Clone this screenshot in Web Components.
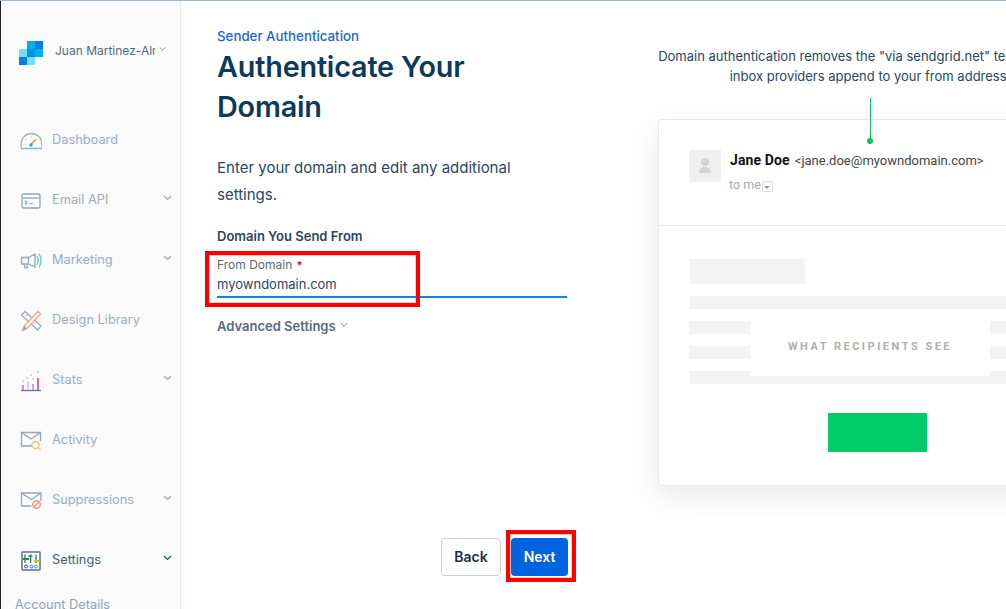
<!DOCTYPE html>
<html lang="en"><head><meta charset="utf-8"><title>Sender Authentication</title>
<style>
html,body{margin:0;height:609px;overflow:hidden;background:#fff;font-family:Inter,"Liberation Sans",sans-serif}
</style></head><body>
<app-shell>
  <side-bar slot="side">
    <user-menu slot="top" name="Juan Martinez-Almeida"></user-menu>
    <nav-item icon="dash">Dashboard</nav-item>
    <nav-item icon="api" caret>Email API</nav-item>
    <nav-item icon="mkt" caret>Marketing</nav-item>
    <nav-item icon="design">Design Library</nav-item>
    <nav-item icon="stats" caret>Stats</nav-item>
    <nav-item icon="activity">Activity</nav-item>
    <nav-item icon="supp" caret>Suppressions</nav-item>
    <nav-item icon="settings" caret active>Settings</nav-item>
    <sub-item>Account Details</sub-item>
  </side-bar>
  <domain-form slot="form"></domain-form>
  <email-preview slot="preview"></email-preview>
</app-shell>
<script>
const chev=(c,w=9)=>`<svg width="${w}" height="6" viewBox="0 0 9 6" fill="none" stroke="${c}" stroke-width="1.1"><path d="M1 1l3.500 3.500L8 1"/></svg>`;
const ICONS={
dash:`<path d="M1 18.500h20.500c.5-1 .5-2.500.5-4C22 8 17 3.500 11.500 3.500S1 8 1 14.500c0 1.500 0 3 .5 4z" fill="none" stroke="#a3b0bf" stroke-width="1.300"/><path d="M11.500 6v2M5.500 9l1.300 1.300M17 9l-1.300 1.300M3.500 14.500h2" stroke="#f7d98a" stroke-width="1.200"/><path d="M11 14.500l4.500-5" stroke="#ff8a65" stroke-width="1.400"/><circle cx="11" cy="15" r="1.700" fill="#3f9ae8"/>`,
api:`<rect x="2" y="4" width="18" height="14" rx="1.500" fill="none" stroke="#94a5b5" stroke-width="1.300"/><path d="M2 8h18" stroke="#94a5b5" stroke-width="1.300"/><path d="M5 10.500l2 2-2 2" fill="none" stroke="#2fd6a0" stroke-width="1.100"/><path d="M9 13.500h4" stroke="#9db3c5" stroke-width="1.100"/>`,
mkt:`<path d="M1.500 7.500h7v6.500h-7zM8.500 7.500L15 4v13l-6.500-3z" fill="none" stroke="#94a5bd" stroke-width="1.300"/><path d="M4 14l1 4h2.500l-1-4" fill="none" stroke="#94a5bd" stroke-width="1.200"/><path d="M17 6c1.500 3 1.500 6 0 9" fill="none" stroke="#6fb7f0" stroke-width="1.200"/><path d="M19 3.500c2.500 4.500 2.500 9.500 0 14" fill="none" stroke="#3fdcb5" stroke-width="1.200"/>`,
design:`<path d="M1.500 5l3.500-3.500 16 14.500-3.500 4z" fill="none" stroke="#9aa9b8" stroke-width="1.300"/><path d="M6 6l1.500-1.500M10 10l1.500-1.500M14 14l1.500-1.500" stroke="#9aa9b8"/><path d="M18 1.500l2.500 2.500L7 18.500l-4.500 2 1.800-4.700z" fill="#fbfbfb" stroke="#ff9a8a" stroke-width="1.300"/><path d="M2.500 20.500l1.800-4.700L7 18.500z" fill="#94a5b5"/>`,
stats:`<path d="M1 20.500h20" stroke="#5f7894" stroke-width="1.300"/><rect x="2" y="15" width="2" height="5" fill="#ff7eb0"/><rect x="7" y="11.500" width="2" height="8.500" fill="#e7c7f7"/><rect x="12" y="14" width="2" height="6" fill="#c3a1ee"/><rect x="17" y="8" width="2" height="12" fill="#bb6bd9"/><path d="M2.500 11h1M6.500 8h1M10.500 5h1M12.500 9h1M17 2h1.500" stroke="#94a5b5" stroke-width="1.500"/>`,
activity:`<path d="M12 16H1.500V2.500h19V11" fill="none" stroke="#94a5b5" stroke-width="1.300"/><path d="M1.500 2.500l9.500 6.500 9.500-6.500" fill="none" stroke="#94a5b5" stroke-width="1.200"/><circle cx="15.500" cy="15" r="3.500" fill="none" stroke="#fbbf70" stroke-width="1.300"/><path d="M18 17.500l2.500 2.500" stroke="#fbbf70" stroke-width="1.400"/>`,
supp:`<path d="M11.500 16H1.500V3h19.500v8" fill="none" stroke="#94a5b5" stroke-width="1.300"/><path d="M1.500 3l10 6.500L21 3" fill="none" stroke="#94a5b5" stroke-width="1.200"/><circle cx="16.500" cy="14.500" r="3.800" fill="none" stroke="#ff8a7a" stroke-width="1.400"/><path d="M14 17l5-5" stroke="#ff8a7a" stroke-width="1.400"/>`,
settings:`<rect x="2" y="2" width="18" height="18" rx="1" fill="#fff" stroke="#7c92a8" stroke-width="2"/><path d="M5 4.500v8.500M10.700 4.500v8.500M16 4.500v8.500" stroke="#1a3b55" stroke-width="1"/><path d="M3 9h6" stroke="#0a9a46" stroke-width="2"/><path d="M8.500 6h4" stroke="#0a9a46" stroke-width="1.500"/><path d="M14 11h5.500" stroke="#c8d400" stroke-width="2"/><circle cx="6" cy="16.500" r="1.500" fill="none" stroke="#4d3f9e"/><circle cx="11.500" cy="16.500" r="1.500" fill="none" stroke="#3a7ac8"/><circle cx="16" cy="16.500" r="1.500" fill="none" stroke="#22b8d8"/>`
};
function el(name,html){customElements.define(name,class extends HTMLElement{connectedCallback(){if(this.shadowRoot)return;const s=this.attachShadow({mode:'open'});s.innerHTML=typeof html==='function'?html(this):html;}});}
el('app-shell',`<style>:host{display:flex;height:609px;border-top:1px solid #a3b5cc;box-sizing:border-box;overflow:hidden}
.s{flex:none;width:181px}.f{flex:none;width:386px;padding-left:36px;box-sizing:border-box}.p{flex:1;min-width:0;overflow:hidden}</style>
<div class="s"><slot name="side"></slot></div><div class="f"><slot name="form"></slot></div><div class="p"><slot name="preview"></slot></div>`);
el('side-bar',`<style>:host{display:block;height:608px;box-sizing:border-box;background:#fafafa;border-left:1px solid #222;border-right:1px solid #e2e9ef;overflow:hidden}
.items{display:flex;flex-direction:column}</style><slot name="top"></slot><div class="items"><slot></slot></div>`);
el('user-menu',h=>`<style>:host{display:flex;align-items:flex-start;height:109px;box-sizing:border-box;padding:40px 0 0 18px;color:#546b81;font-size:12px}
.logo{flex:none;display:grid;grid-template-columns:repeat(3,8px);grid-auto-rows:8px;margin-right:12px}
.logo i{display:block}.n{width:100px;overflow:hidden;white-space:nowrap;line-height:20px;margin-right:4px;height:20px}
svg{margin-top:5px}</style>
<div class="logo"><i></i><i style="background:#00b2e3"></i><i style="background:#0080e6"></i><i style="background:#6fe0f5"></i><i style="background:#0095dd"></i><i style="background:#00b2e3"></i><i style="background:#0080e6"></i><i style="background:#6fe0f5"></i><i></i></div>
<div class="n">${h.getAttribute('name')}</div>${chev('#6a8096',7)}`);
el('nav-item',h=>{const a=h.hasAttribute('active');return `<style>:host{display:flex;align-items:center;height:60px;box-sizing:border-box;padding:0 8px 0 19px;font-size:12.800px;color:${a?'#41607e':'#9cadbe'}}
svg.i{flex:none;width:22px;height:22px;margin-right:10px;margin-top:2px}span{flex:1;margin-top:-1px}.c{display:flex;margin-top:-4px}</style>
<svg class="i" viewBox="0 0 22 22">${ICONS[h.getAttribute('icon')]}</svg><span><slot></slot></span>${h.hasAttribute('caret')?`<div class="c">${chev(a?'#1f4f78':'#94a9bd')}</div>`:''}`});
el('sub-item',`<style>:host{display:block;padding:1px 0 0 14px;font-size:12.800px;color:#8fa3b6;white-space:nowrap;line-height:16px;margin-top:6px}</style><slot></slot>`);
el('domain-form',`<style>:host{display:flex;flex-direction:column;width:350px;position:relative;height:608px;box-sizing:border-box;padding-top:27px}
.eyebrow{font-size:13.300px;font-weight:500;color:#1a65d6;line-height:16px}
h1{margin:3px 0 0;font-size:28.800px;line-height:40px;font-weight:600;color:#0e3a5a;letter-spacing:-.2px;width:300px}
p{margin:27px 0 0;font-size:15px;line-height:27px;color:#294661;width:310px}
h2{margin:20px 0 0;font-size:13px;line-height:16px;font-weight:600;color:#294661}
.field{margin-top:13px;border-bottom:2px solid #0f85e6;height:41px;box-sizing:border-box}
label{display:block;font-size:12px;line-height:16px;color:#546b81}label b{color:#e3001b;font-weight:700;margin-left:1px;font-size:11px}
.v{font-size:13px;line-height:18px;margin-top:2px;color:#294661}
.adv{margin-top:20px;font-size:13px;line-height:16px;font-weight:600;color:#546b81;display:flex;align-items:center;gap:4px}.adv svg{margin-top:-3px}
.btns{position:absolute;top:537px;left:224px;display:flex;gap:10px}
button{font:600 14px Inter,sans-serif;height:38px;border-radius:4px;box-sizing:border-box;padding:0 0 1px}
.b{width:60px;background:#fff;border:1px solid #c9d0da;color:#1c2d3f}.n{width:57px;background:#0263e0;border:0;color:#fff}
.red{position:absolute;border:4px solid #f00;box-sizing:border-box;pointer-events:none;box-shadow:inset 0 0 0 1px rgba(255,0,0,.2)}</style>
<div class="eyebrow">Sender Authentication</div>
<h1>Authenticate Your Domain</h1>
<p>Enter your domain and edit any additional settings.</p>
<h2>Domain You Send From</h2>
<div class="field"><label>From Domain <b>*</b></label><div class="v">myowndomain.com</div></div>
<div class="adv">Advanced Settings ${chev('#6a8096',8)}</div>
<div class="btns"><button class="b">Back</button><button class="n">Next</button></div>
<div class="red" style="left:-12px;top:250px;width:215px;height:56px"></div>
<div class="red" style="left:289px;top:529px;width:70px;height:52px"></div>`);
el('email-preview',`<style>:host{display:block;position:relative;height:608px;width:500px;box-sizing:border-box}
.t{position:absolute;left:3px;width:600px;top:45px;text-align:center;font-size:13px;line-height:20px;color:#294661;white-space:nowrap}
.t span{padding-right:38px}
.ln{position:absolute;left:303px;top:97px;width:1px;height:44px;background:#00c767}.dot{position:absolute;left:300px;top:137px;width:6px;height:6px;border-radius:50%;background:#00c767}
.card{position:absolute;left:91px;top:118px;width:440px;height:367px;background:#fff;border:1px solid #e8e8e8;border-radius:4px;box-sizing:border-box;box-shadow:0 10px 30px rgba(0,0,0,.09)}
.head{height:106px;border-bottom:1px solid #e8e8e8;box-sizing:border-box;padding:30px 0 0 30px;display:flex;gap:9px}
.av{width:32px;height:32px;background:#efefef;display:flex;align-items:center;justify-content:center}
.who{font:13px/16px Roboto,sans-serif;color:#444;padding-top:2px}.who b{font-size:14px;color:#111;font-weight:700;font-family:Roboto,sans-serif;margin-right:2px;letter-spacing:.1px}
.me{margin-top:8px;margin-left:-1px;color:#aaa;display:flex;align-items:center;font-size:12.500px}.me i{display:inline-flex;align-items:center;justify-content:center;width:9px;height:9px;border:1px solid #ddd;border-radius:2px;margin-left:1px;margin-top:2px}
.me i::after{content:"";border:3px solid transparent;border-top-color:#999;margin-top:3px;border-bottom:0}
.body{padding:33px 0 0 30px;position:relative}.bar{background:#f3f3f3;height:13px;margin-bottom:12px;width:410px}
.big{width:116px;height:25px;margin-bottom:12px}
.over{position:absolute;left:91px;top:90px;width:240px;height:60px;background:#fff;border-radius:2px;display:flex;align-items:center;justify-content:center;font:700 11px Roboto,sans-serif;letter-spacing:2.500px;color:#b0b0b0}
.cta{width:99px;height:39px;background:#00cc69;border-radius:1px;margin:29px 0 0 139px}</style>
<div class="t"><span>Domain authentication removes the "via sendgrid.net" text that</span><br>inbox providers append to your from address.</div>
<div class="card">
<div class="head"><div class="av"><svg width="16" height="18" viewBox="0 0 16 18" fill="#d3d3d3"><circle cx="8" cy="5" r="4"/><path d="M2 16c0-4 3-6 6-6s6 2 6 6z"/></svg></div>
<div class="who"><div><b>Jane Doe</b> &lt;jane.doe@myowndomain.com&gt;</div><div class="me">to me<i></i></div></div></div>
<div class="body"><div class="bar big"></div><div class="bar"></div><div class="bar"></div><div class="bar"></div><div class="bar"></div>
<div class="over">WHAT RECIPIENTS SEE</div><div class="cta"></div></div>
</div><div class="ln"></div><div class="dot"></div>`);
</script>
</body></html>
